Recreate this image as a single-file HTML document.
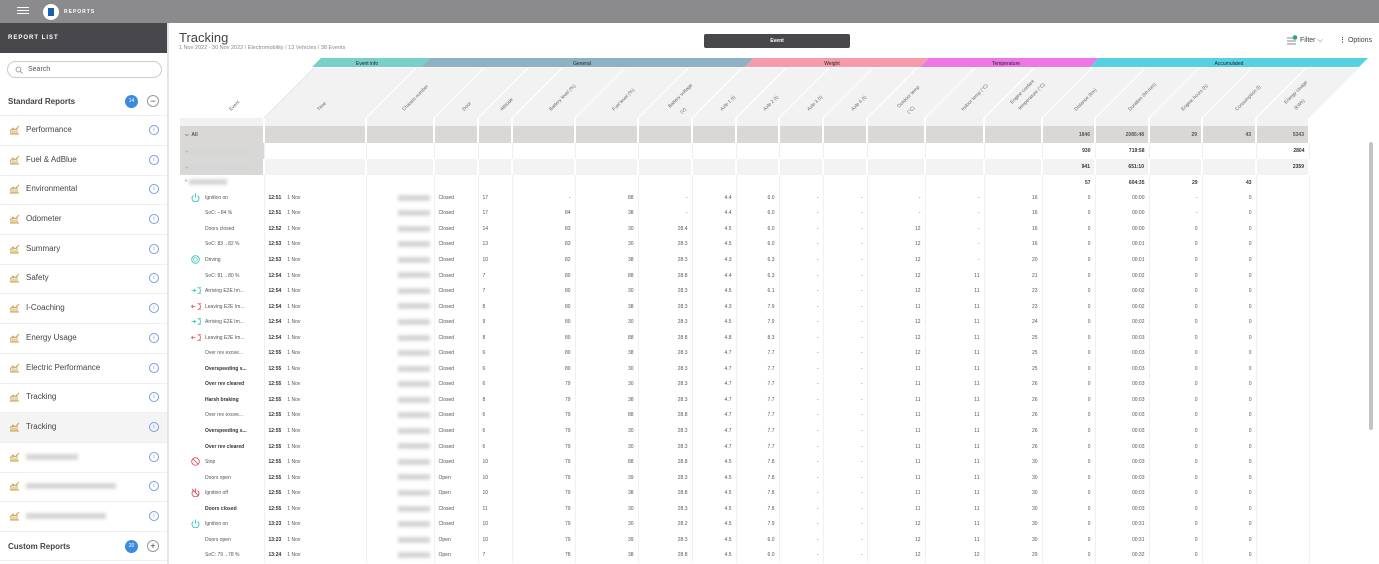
<!DOCTYPE html>
<html><head><meta charset="utf-8"><style>
*{box-sizing:border-box;margin:0;padding:0}
body{width:1379px;height:564px;overflow:hidden;background:#fff;font-family:"Liberation Sans",sans-serif;position:relative;color:#333}
.top{position:absolute;left:0;top:0;width:1379px;height:23px;background:#8b8b8e}
.side{position:absolute;left:0;top:23px;width:169px;height:541px;background:#fff;border-right:2px solid #e4e4e4}
.sh{height:30px;background:#48484c;color:#fff;font-size:6px;font-weight:bold;letter-spacing:1px;padding:12px 0 0 8px}
.search{position:absolute;left:7px;top:38px;width:155px;height:17px;border:1px solid #ccc;border-radius:9px;font-size:7px;color:#555;padding:4px 0 0 20px}
.sec{position:absolute;left:0;width:167px;font-size:8px;font-weight:bold;color:#444;padding-left:8px;border-bottom:1px solid #eee}
.badge{position:absolute;left:125px;width:13px;height:13px;border-radius:50%;background:#3d8be0;color:#fff;font-size:5px;text-align:center;line-height:13px;font-weight:normal}
.pm{position:absolute;left:147px;width:12px;height:12px;border-radius:50%;border:1px solid #999;font-size:9px;text-align:center;line-height:10px;font-weight:normal;color:#333}
.it{position:absolute;left:0;width:167px;height:30px;border-bottom:1px solid #eee;font-size:8px;color:#444;padding:9px 0 0 26px}
.it.sel{background:#f4f4f4}
.ic{position:absolute;left:9px;top:9px}
.inf{position:absolute;left:149px;top:9px;width:10px;height:10px;border-radius:50%;border:1px solid #7a9de0;font-size:6px;color:#7a9de0;text-align:center;line-height:8px;font-family:"Liberation Serif",serif}
.blur{display:inline-block;background:#d6d6d6;filter:blur(1.5px);height:6px;vertical-align:middle}
table{position:absolute;left:180px;top:118px;border-collapse:collapse;table-layout:fixed;font-size:5px;color:#555}
td{height:15.55px;padding:0 4px;white-space:nowrap;overflow:hidden;border-right:1px solid #f0f0f0;text-align:right}
td:first-child{text-align:left;padding-left:25px;position:relative}
td:nth-child(2),td:nth-child(4),td:nth-child(5){text-align:left}
tr.h td{height:8px;background:#f1f1f1;border-right:2px solid #fff}
tr.a td{height:17px;background:#d9d8d6;border-right:2px solid #fff;font-weight:bold}
tr.g1 td{height:16px}
tr.g2 td{height:16px;background:#f3f3f3;border-right:2px solid #fff}
tr.t td{height:15px}
tr.h td:first-child,tr.a td:first-child,tr.g1 td:first-child,tr.g2 td:first-child,tr.t td:first-child{padding-left:5px}
tr.g1 td:first-child,tr.g2 td:first-child{background:#d9d8d6}
b{color:#333}
.ti b{margin-right:6px}
.ei{position:absolute;left:11px;top:3px}
</style></head><body>
<div class="top">
<div style="position:absolute;left:17px;top:7px;width:12px;height:1px;background:#fff;box-shadow:0 3px 0 #fff,0 6px 0 #fff"></div>
<div style="position:absolute;left:43px;top:4px;width:16px;height:16px;border-radius:50%;background:#fff"><div style="position:absolute;left:5px;top:4px;width:6px;height:8px;background:#1b5fa8"></div></div>
<div style="position:absolute;left:64px;top:9px;font-size:5px;color:#fff;letter-spacing:1px;font-weight:bold">REPORTS</div>
</div>
<div class="side">
<div class="sh">REPORT LIST</div>
<div class="search"><svg style="position:absolute;left:7px;top:4px" width="8" height="8"><circle cx="3.5" cy="3.5" r="2.5" fill="none" stroke="#888" stroke-width="0.8"/><line x1="5.5" y1="5.5" x2="7.5" y2="7.5" stroke="#888" stroke-width="0.8"/></svg>Search</div>
<div class="sec" style="top:64px;height:29px;padding-top:10px">Standard Reports<span class="badge" style="top:8px">14</span><span class="pm" style="top:8px">−</span></div>
<div class="it" style="top:93px"><svg class="ic" width="11" height="10"><path d="M1 9h9M2 9V6M4 9V4M6 9V6M8 9V3M1 6l3-3 2 2 4-4" stroke="#c9a04a" stroke-width="0.9" fill="none"/></svg>Performance<span class="inf">i</span></div>
<div class="it" style="top:123px"><svg class="ic" width="11" height="10"><path d="M1 9h9M2 9V6M4 9V4M6 9V6M8 9V3M1 6l3-3 2 2 4-4" stroke="#c9a04a" stroke-width="0.9" fill="none"/></svg>Fuel &amp; AdBlue<span class="inf">i</span></div>
<div class="it" style="top:152px"><svg class="ic" width="11" height="10"><path d="M1 9h9M2 9V6M4 9V4M6 9V6M8 9V3M1 6l3-3 2 2 4-4" stroke="#c9a04a" stroke-width="0.9" fill="none"/></svg>Environmental<span class="inf">i</span></div>
<div class="it" style="top:182px"><svg class="ic" width="11" height="10"><path d="M1 9h9M2 9V6M4 9V4M6 9V6M8 9V3M1 6l3-3 2 2 4-4" stroke="#c9a04a" stroke-width="0.9" fill="none"/></svg>Odometer<span class="inf">i</span></div>
<div class="it" style="top:212px"><svg class="ic" width="11" height="10"><path d="M1 9h9M2 9V6M4 9V4M6 9V6M8 9V3M1 6l3-3 2 2 4-4" stroke="#c9a04a" stroke-width="0.9" fill="none"/></svg>Summary<span class="inf">i</span></div>
<div class="it" style="top:241px"><svg class="ic" width="11" height="10"><path d="M1 9h9M2 9V6M4 9V4M6 9V6M8 9V3M1 6l3-3 2 2 4-4" stroke="#c9a04a" stroke-width="0.9" fill="none"/></svg>Safety<span class="inf">i</span></div>
<div class="it" style="top:271px"><svg class="ic" width="11" height="10"><path d="M1 9h9M2 9V6M4 9V4M6 9V6M8 9V3M1 6l3-3 2 2 4-4" stroke="#c9a04a" stroke-width="0.9" fill="none"/></svg>I-Coaching<span class="inf">i</span></div>
<div class="it" style="top:301px"><svg class="ic" width="11" height="10"><path d="M1 9h9M2 9V6M4 9V4M6 9V6M8 9V3M1 6l3-3 2 2 4-4" stroke="#c9a04a" stroke-width="0.9" fill="none"/></svg>Energy Usage<span class="inf">i</span></div>
<div class="it" style="top:331px"><svg class="ic" width="11" height="10"><path d="M1 9h9M2 9V6M4 9V4M6 9V6M8 9V3M1 6l3-3 2 2 4-4" stroke="#c9a04a" stroke-width="0.9" fill="none"/></svg>Electric Performance<span class="inf">i</span></div>
<div class="it" style="top:360px"><svg class="ic" width="11" height="10"><path d="M1 9h9M2 9V6M4 9V4M6 9V6M8 9V3M1 6l3-3 2 2 4-4" stroke="#c9a04a" stroke-width="0.9" fill="none"/></svg>Tracking<span class="inf">i</span></div>
<div class="it sel" style="top:390px"><svg class="ic" width="11" height="10"><path d="M1 9h9M2 9V6M4 9V4M6 9V6M8 9V3M1 6l3-3 2 2 4-4" stroke="#c9a04a" stroke-width="0.9" fill="none"/></svg>Tracking<span class="inf">i</span></div>
<div class="it" style="top:420px"><svg class="ic" width="11" height="10"><path d="M1 9h9M2 9V6M4 9V4M6 9V6M8 9V3M1 6l3-3 2 2 4-4" stroke="#c9a04a" stroke-width="0.9" fill="none"/></svg><span class="blur" style="width:52px"></span><span class="inf">i</span></div>
<div class="it" style="top:449px"><svg class="ic" width="11" height="10"><path d="M1 9h9M2 9V6M4 9V4M6 9V6M8 9V3M1 6l3-3 2 2 4-4" stroke="#c9a04a" stroke-width="0.9" fill="none"/></svg><span class="blur" style="width:90px"></span><span class="inf">i</span></div>
<div class="it" style="top:479px"><svg class="ic" width="11" height="10"><path d="M1 9h9M2 9V6M4 9V4M6 9V6M8 9V3M1 6l3-3 2 2 4-4" stroke="#c9a04a" stroke-width="0.9" fill="none"/></svg><span class="blur" style="width:80px"></span><span class="inf">i</span></div>
<div class="sec" style="top:509px;height:29px;padding-top:10px">Custom Reports<span class="badge" style="top:8px">20</span><span class="pm" style="top:8px">+</span></div>
</div>

<div style="position:absolute;left:179px;top:30px;font-size:13px;color:#444">Tracking</div>
<div style="position:absolute;left:179px;top:45px;font-size:5.5px;color:#888">1 Nov 2022 - 30 Nov 2022 / Electromobility / 13 Vehicles / 38 Events</div>
<div style="position:absolute;left:704px;top:34px;width:146px;height:14px;background:#48484c;border-radius:2px;color:#fff;font-size:5px;font-weight:bold;text-align:center;line-height:14px">Event</div>
<div style="position:absolute;left:1286px;top:35px;font-size:7px;color:#444"><svg width="12" height="10" style="vertical-align:middle"><path d="M1 3h9M1 6h9M1 9h9" stroke="#666" stroke-width="0.8"/><circle cx="9" cy="2.5" r="2.3" fill="#2aa77a"/></svg> Filter ⌵</div>
<div style="position:absolute;left:1339px;top:36px;font-size:7px;color:#444"><span style="font-weight:bold">⋮</span> Options</div>
<div style="position:absolute;left:1369px;top:142px;width:4px;height:288px;background:#c4c4c4;border-radius:2px"></div>

<svg style="position:absolute;left:0;top:0" width="1379" height="130">
<polygon points="264,118 314,68 1359,68 1309,118" fill="#f2f2f2"/>
<polygon points="312,67 321,58 430,58 421,67" fill="#79d0c8"/>
<polygon points="421,67 430,58 754,58 745,67" fill="#8fb1c4"/>
<polygon points="745,67 754,58 929,58 920,67" fill="#f79bab"/>
<polygon points="920,67 929,58 1099,58 1090,67" fill="#ee76e6"/>
<polygon points="1090,67 1099,58 1368,58 1359,67" fill="#55d2e1"/>
<g font-size="5" fill="#222" text-anchor="middle" font-family="Liberation Sans"><text x="367" y="65">Event info</text><text x="582" y="65">General</text><text x="832" y="65">Weight</text><text x="1006" y="65">Temperature</text><text x="1229" y="65">Accumulated</text></g>
<g stroke="#fff" stroke-width="1.2">
<line x1="366" y1="118" x2="416" y2="68"/><line x1="434" y1="118" x2="484" y2="68"/><line x1="478" y1="118" x2="528" y2="68"/><line x1="512" y1="118" x2="562" y2="68"/><line x1="575" y1="118" x2="625" y2="68"/><line x1="638" y1="118" x2="688" y2="68"/><line x1="692" y1="118" x2="742" y2="68"/><line x1="736" y1="118" x2="786" y2="68"/><line x1="779" y1="118" x2="829" y2="68"/><line x1="823" y1="118" x2="873" y2="68"/><line x1="867" y1="118" x2="917" y2="68"/><line x1="925" y1="118" x2="975" y2="68"/><line x1="984" y1="118" x2="1034" y2="68"/><line x1="1042" y1="118" x2="1092" y2="68"/><line x1="1095" y1="118" x2="1145" y2="68"/><line x1="1149" y1="118" x2="1199" y2="68"/><line x1="1202" y1="118" x2="1252" y2="68"/><line x1="1256" y1="118" x2="1306" y2="68"/>
</g>
<g stroke="#ddd" stroke-width="0.6"><line x1="264" y1="118" x2="314" y2="68"/></g>
<g font-size="4.8" fill="#666" font-family="Liberation Sans">
<text transform="translate(231,111) rotate(-45)">Event</text>
<text transform="translate(319,111) rotate(-45)">Time</text>
<text transform="translate(404,111) rotate(-45)">Chassis number</text>
<text transform="translate(464,111) rotate(-45)">Door</text>
<text transform="translate(502,111) rotate(-45)">Altitude</text>
<text transform="translate(551,111) rotate(-45)">Battery level (%)</text>
<text transform="translate(614,111) rotate(-45)">Fuel level (%)</text>
<text transform="translate(670,108) rotate(-45)">Battery voltage</text><text transform="translate(682,114) rotate(-45)">(V)</text>
<text transform="translate(722,111) rotate(-45)">Axle 1 (t)</text>
<text transform="translate(765,111) rotate(-45)">Axle 2 (t)</text>
<text transform="translate(809,111) rotate(-45)">Axle 3 (t)</text>
<text transform="translate(853,111) rotate(-45)">Axle 4 (t)</text>
<text transform="translate(899,108) rotate(-45)">Outdoor temp</text><text transform="translate(909,114) rotate(-45)">(°C)</text>
<text transform="translate(963,111) rotate(-45)">Indoor temp (°C)</text>
<text transform="translate(1012,104) rotate(-45)">Engine coolant</text><text transform="translate(1020,110) rotate(-45)">temperature (°C)</text>
<text transform="translate(1076,111) rotate(-45)">Distance (km)</text>
<text transform="translate(1130,111) rotate(-45)">Duration (hh:mm)</text>
<text transform="translate(1183,111) rotate(-45)">Engine hours (h)</text>
<text transform="translate(1237,111) rotate(-45)">Consumption (l)</text>
<text transform="translate(1286,104) rotate(-45)">Energy Usage</text><text transform="translate(1296,110) rotate(-45)">(kWh)</text>
</g>
</svg>

<table>
<colgroup><col style="width:84px"><col style="width:102px"><col style="width:68px"><col style="width:44px"><col style="width:34px"><col style="width:63px"><col style="width:63px"><col style="width:54px"><col style="width:44px"><col style="width:43px"><col style="width:44px"><col style="width:44px"><col style="width:58px"><col style="width:59px"><col style="width:58px"><col style="width:53px"><col style="width:54px"><col style="width:53px"><col style="width:54px"><col style="width:53px"></colgroup>
<tr class="h"><td></td><td></td><td></td><td></td><td></td><td></td><td></td><td></td><td></td><td></td><td></td><td></td><td></td><td></td><td></td><td></td><td></td><td></td><td></td><td></td></tr>
<tr class="a"><td>⌵&nbsp; All</td><td></td><td></td><td></td><td></td><td></td><td></td><td></td><td></td><td></td><td></td><td></td><td></td><td></td><td></td><td>1846</td><td>2085:48</td><td>29</td><td>43</td><td>5343</td></tr>
<tr class="g1"><td>⌵ <span class="blur" style="width:62px"></span></td><td></td><td></td><td></td><td></td><td></td><td></td><td></td><td></td><td></td><td></td><td></td><td></td><td></td><td></td><td><b>930</b></td><td><b>719:58</b></td><td></td><td></td><td><b>2804</b></td></tr>
<tr class="g2"><td>⌵ <span class="blur" style="width:62px"></span></td><td></td><td></td><td></td><td></td><td></td><td></td><td></td><td></td><td></td><td></td><td></td><td></td><td></td><td></td><td><b>941</b></td><td><b>651:10</b></td><td></td><td></td><td><b>2359</b></td></tr>
<tr class="t"><td>^ <span class="blur" style="width:38px"></span></td><td></td><td></td><td></td><td></td><td></td><td></td><td></td><td></td><td></td><td></td><td></td><td></td><td></td><td></td><td><b>57</b></td><td><b>604:35</b></td><td><b>29</b></td><td><b>43</b></td><td></td></tr>
<tr><td><svg class="ei" width="9" height="9"><path d="M2.5 2.5a3.5 3.5 0 1 0 4 0M4.5 0.5v4" stroke="#2ec4b6" stroke-width="0.9" fill="none"/></svg>Ignition on</td><td class="ti"><b>12:51</b>1 Nov</td><td><span class="blur" style="width:32px"></span></td><td>Closed</td><td>17</td><td>-</td><td>88</td><td>-</td><td>4.4</td><td>6.0</td><td>-</td><td>-</td><td>-</td><td>-</td><td>16</td><td>0</td><td>00:00</td><td>-</td><td>0</td><td></td></tr>
<tr><td>SoC: --84 %</td><td class="ti"><b>12:51</b>1 Nov</td><td><span class="blur" style="width:32px"></span></td><td>Closed</td><td>17</td><td>84</td><td>38</td><td>-</td><td>4.4</td><td>6.0</td><td>-</td><td>-</td><td>-</td><td>-</td><td>16</td><td>0</td><td>00:00</td><td>-</td><td>0</td><td></td></tr>
<tr><td>Doors closed</td><td class="ti"><b>12:52</b>1 Nov</td><td><span class="blur" style="width:32px"></span></td><td>Closed</td><td>14</td><td>83</td><td>30</td><td>28.4</td><td>4.5</td><td>6.0</td><td>-</td><td>-</td><td>12</td><td>-</td><td>16</td><td>0</td><td>00:00</td><td>0</td><td>0</td><td></td></tr>
<tr><td>SoC: 83→82 %</td><td class="ti"><b>12:53</b>1 Nov</td><td><span class="blur" style="width:32px"></span></td><td>Closed</td><td>13</td><td>83</td><td>30</td><td>28.3</td><td>4.5</td><td>6.0</td><td>-</td><td>-</td><td>12</td><td>-</td><td>16</td><td>0</td><td>00:01</td><td>0</td><td>0</td><td></td></tr>
<tr><td><svg class="ei" width="9" height="9"><circle cx="4.5" cy="4.5" r="3.8" stroke="#2ec4b6" stroke-width="0.9" fill="none"/><circle cx="4.5" cy="4.5" r="1.8" stroke="#2ec4b6" stroke-width="0.7" fill="none"/></svg>Driving</td><td class="ti"><b>12:53</b>1 Nov</td><td><span class="blur" style="width:32px"></span></td><td>Closed</td><td>10</td><td>82</td><td>38</td><td>28.3</td><td>4.3</td><td>6.3</td><td>-</td><td>-</td><td>12</td><td>-</td><td>20</td><td>0</td><td>00:01</td><td>0</td><td>0</td><td></td></tr>
<tr><td>SoC: 81→80 %</td><td class="ti"><b>12:54</b>1 Nov</td><td><span class="blur" style="width:32px"></span></td><td>Closed</td><td>7</td><td>80</td><td>88</td><td>28.8</td><td>4.4</td><td>6.3</td><td>-</td><td>-</td><td>12</td><td>11</td><td>21</td><td>0</td><td>00:02</td><td>0</td><td>0</td><td></td></tr>
<tr><td><svg class="ei" width="10" height="9"><path d="M0.5 4.5h4M3 3l1.5 1.5L3 6M6.5 1.5a3 3 0 0 1 0 6M8.5 1.5a3 3 0 0 1 0 6" stroke="#2ec4b6" stroke-width="0.8" fill="none"/></svg>Arriving E2E Im...</td><td class="ti"><b>12:54</b>1 Nov</td><td><span class="blur" style="width:32px"></span></td><td>Closed</td><td>7</td><td>80</td><td>30</td><td>28.3</td><td>4.5</td><td>6.1</td><td>-</td><td>-</td><td>12</td><td>11</td><td>23</td><td>0</td><td>00:02</td><td>0</td><td>0</td><td></td></tr>
<tr><td><svg class="ei" width="10" height="9"><path d="M0.5 4.5h4M2 3L0.5 4.5 2 6M6.5 1.5a3 3 0 0 1 0 6M8.5 1.5a3 3 0 0 1 0 6" stroke="#e0505a" stroke-width="0.8" fill="none"/></svg>Leaving E2E Im...</td><td class="ti"><b>12:54</b>1 Nov</td><td><span class="blur" style="width:32px"></span></td><td>Closed</td><td>8</td><td>80</td><td>38</td><td>28.3</td><td>4.3</td><td>7.9</td><td>-</td><td>-</td><td>11</td><td>11</td><td>23</td><td>0</td><td>00:02</td><td>0</td><td>0</td><td></td></tr>
<tr><td><svg class="ei" width="10" height="9"><path d="M0.5 4.5h4M3 3l1.5 1.5L3 6M6.5 1.5a3 3 0 0 1 0 6M8.5 1.5a3 3 0 0 1 0 6" stroke="#2ec4b6" stroke-width="0.8" fill="none"/></svg>Arriving E2E Im...</td><td class="ti"><b>12:54</b>1 Nov</td><td><span class="blur" style="width:32px"></span></td><td>Closed</td><td>9</td><td>80</td><td>30</td><td>28.3</td><td>4.5</td><td>7.9</td><td>-</td><td>-</td><td>12</td><td>11</td><td>24</td><td>0</td><td>00:02</td><td>0</td><td>0</td><td></td></tr>
<tr><td><svg class="ei" width="10" height="9"><path d="M0.5 4.5h4M2 3L0.5 4.5 2 6M6.5 1.5a3 3 0 0 1 0 6M8.5 1.5a3 3 0 0 1 0 6" stroke="#e0505a" stroke-width="0.8" fill="none"/></svg>Leaving E2E Im...</td><td class="ti"><b>12:54</b>1 Nov</td><td><span class="blur" style="width:32px"></span></td><td>Closed</td><td>8</td><td>80</td><td>88</td><td>28.8</td><td>4.8</td><td>8.3</td><td>-</td><td>-</td><td>12</td><td>11</td><td>25</td><td>0</td><td>00:03</td><td>0</td><td>0</td><td></td></tr>
<tr><td>Over rev excee...</td><td class="ti"><b>12:55</b>1 Nov</td><td><span class="blur" style="width:32px"></span></td><td>Closed</td><td>6</td><td>80</td><td>38</td><td>28.3</td><td>4.7</td><td>7.7</td><td>-</td><td>-</td><td>12</td><td>11</td><td>25</td><td>0</td><td>00:03</td><td>0</td><td>0</td><td></td></tr>
<tr><td><b>Overspeeding s...</b></td><td class="ti"><b>12:55</b>1 Nov</td><td><span class="blur" style="width:32px"></span></td><td>Closed</td><td>6</td><td>80</td><td>30</td><td>28.3</td><td>4.7</td><td>7.7</td><td>-</td><td>-</td><td>11</td><td>11</td><td>25</td><td>0</td><td>00:03</td><td>0</td><td>0</td><td></td></tr>
<tr><td><b>Over rev cleared</b></td><td class="ti"><b>12:55</b>1 Nov</td><td><span class="blur" style="width:32px"></span></td><td>Closed</td><td>6</td><td>79</td><td>30</td><td>28.3</td><td>4.7</td><td>7.7</td><td>-</td><td>-</td><td>11</td><td>11</td><td>26</td><td>0</td><td>00:03</td><td>0</td><td>0</td><td></td></tr>
<tr><td><b>Harsh braking</b></td><td class="ti"><b>12:55</b>1 Nov</td><td><span class="blur" style="width:32px"></span></td><td>Closed</td><td>8</td><td>79</td><td>38</td><td>28.3</td><td>4.7</td><td>7.7</td><td>-</td><td>-</td><td>11</td><td>11</td><td>26</td><td>0</td><td>00:03</td><td>0</td><td>0</td><td></td></tr>
<tr><td>Over rev excee...</td><td class="ti"><b>12:55</b>1 Nov</td><td><span class="blur" style="width:32px"></span></td><td>Closed</td><td>6</td><td>79</td><td>88</td><td>28.8</td><td>4.7</td><td>7.7</td><td>-</td><td>-</td><td>11</td><td>11</td><td>26</td><td>0</td><td>00:03</td><td>0</td><td>0</td><td></td></tr>
<tr><td><b>Overspeeding s...</b></td><td class="ti"><b>12:55</b>1 Nov</td><td><span class="blur" style="width:32px"></span></td><td>Closed</td><td>6</td><td>79</td><td>30</td><td>28.3</td><td>4.7</td><td>7.7</td><td>-</td><td>-</td><td>11</td><td>11</td><td>26</td><td>0</td><td>00:03</td><td>0</td><td>0</td><td></td></tr>
<tr><td><b>Over rev cleared</b></td><td class="ti"><b>12:55</b>1 Nov</td><td><span class="blur" style="width:32px"></span></td><td>Closed</td><td>6</td><td>79</td><td>30</td><td>28.3</td><td>4.7</td><td>7.7</td><td>-</td><td>-</td><td>11</td><td>11</td><td>26</td><td>0</td><td>00:03</td><td>0</td><td>0</td><td></td></tr>
<tr><td><svg class="ei" width="9" height="9"><circle cx="4.5" cy="4.5" r="3.8" stroke="#e0505a" stroke-width="0.9" fill="none"/><path d="M1.8 1.8l5.4 5.4" stroke="#e0505a" stroke-width="0.8"/></svg>Stop</td><td class="ti"><b>12:55</b>1 Nov</td><td><span class="blur" style="width:32px"></span></td><td>Closed</td><td>10</td><td>79</td><td>88</td><td>28.8</td><td>4.5</td><td>7.8</td><td>-</td><td>-</td><td>11</td><td>11</td><td>30</td><td>0</td><td>00:03</td><td>0</td><td>0</td><td></td></tr>
<tr><td>Doors open</td><td class="ti"><b>12:55</b>1 Nov</td><td><span class="blur" style="width:32px"></span></td><td>Open</td><td>10</td><td>79</td><td>39</td><td>28.3</td><td>4.5</td><td>7.8</td><td>-</td><td>-</td><td>11</td><td>11</td><td>30</td><td>0</td><td>00:03</td><td>0</td><td>0</td><td></td></tr>
<tr><td><svg class="ei" width="9" height="9"><path d="M2.5 2.5a3.5 3.5 0 1 0 4 0M4.5 0.5v4M1 1l7 7" stroke="#e0505a" stroke-width="0.9" fill="none"/></svg>Ignition off</td><td class="ti"><b>12:55</b>1 Nov</td><td><span class="blur" style="width:32px"></span></td><td>Open</td><td>10</td><td>79</td><td>38</td><td>28.8</td><td>4.5</td><td>7.8</td><td>-</td><td>-</td><td>11</td><td>11</td><td>30</td><td>0</td><td>00:03</td><td>0</td><td>0</td><td></td></tr>
<tr><td><b>Doors closed</b></td><td class="ti"><b>12:55</b>1 Nov</td><td><span class="blur" style="width:32px"></span></td><td>Closed</td><td>11</td><td>79</td><td>30</td><td>28.3</td><td>4.5</td><td>7.8</td><td>-</td><td>-</td><td>11</td><td>11</td><td>30</td><td>0</td><td>00:03</td><td>0</td><td>0</td><td></td></tr>
<tr><td><svg class="ei" width="9" height="9"><path d="M2.5 2.5a3.5 3.5 0 1 0 4 0M4.5 0.5v4" stroke="#2ec4b6" stroke-width="0.9" fill="none"/></svg>Ignition on</td><td class="ti"><b>13:23</b>1 Nov</td><td><span class="blur" style="width:32px"></span></td><td>Closed</td><td>10</td><td>79</td><td>30</td><td>28.2</td><td>4.5</td><td>7.9</td><td>-</td><td>-</td><td>12</td><td>11</td><td>30</td><td>0</td><td>00:31</td><td>0</td><td>0</td><td></td></tr>
<tr><td>Doors open</td><td class="ti"><b>13:23</b>1 Nov</td><td><span class="blur" style="width:32px"></span></td><td>Open</td><td>10</td><td>79</td><td>39</td><td>28.3</td><td>4.5</td><td>6.0</td><td>-</td><td>-</td><td>12</td><td>11</td><td>30</td><td>0</td><td>00:31</td><td>0</td><td>0</td><td></td></tr>
<tr><td>SoC: 79→78 %</td><td class="ti"><b>13:24</b>1 Nov</td><td><span class="blur" style="width:32px"></span></td><td>Open</td><td>7</td><td>78</td><td>38</td><td>28.8</td><td>4.5</td><td>6.0</td><td>-</td><td>-</td><td>12</td><td>12</td><td>29</td><td>0</td><td>00:32</td><td>0</td><td>0</td><td></td></tr>
</table>
</body></html>
